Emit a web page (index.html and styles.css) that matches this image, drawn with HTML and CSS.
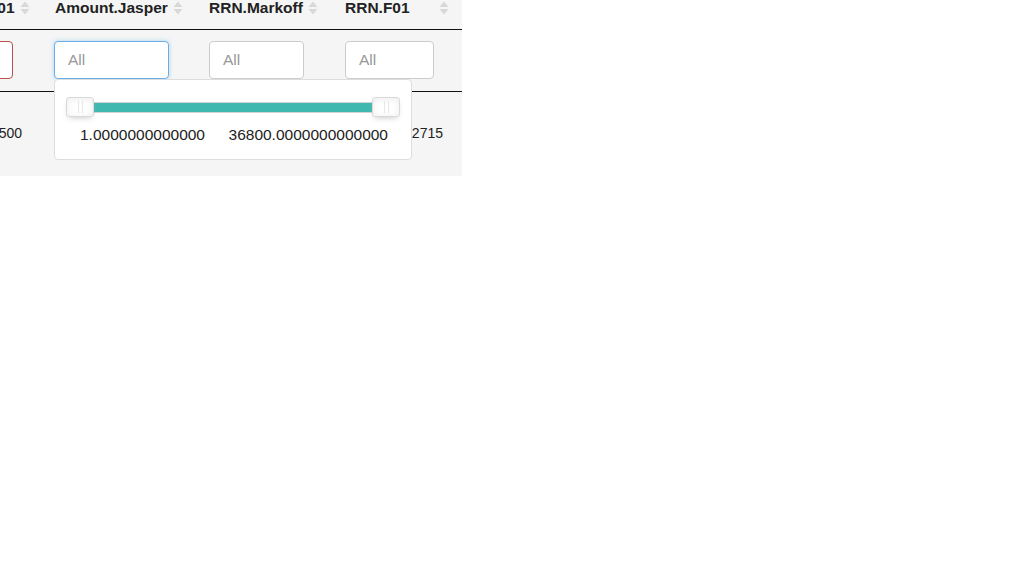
FILE: index.html
```html
<!DOCTYPE html>
<html lang="en">
<head>
    <meta charset="UTF-8">
    <meta name="viewport" content="width=device-width, initial-scale=1.0">
    <title>Transactions</title>
    <link rel="stylesheet" href="styles.css">
</head>
<body>
    <div class="table-view">
        <table class="grid">
            <colgroup>
                <col class="col-first">
                <col class="col-amount">
                <col class="col-markoff">
                <col class="col-f01">
            </colgroup>
            <thead>
                <tr class="head-row">
                    <th><div class="th-inner"><span>Amount.F01</span><svg class="sort" width="10" height="14" viewBox="0 0 10 14"><path d="M5 0.5 L9.5 6 L0.5 6 Z"/><path d="M0.5 8 L9.5 8 L5 13.5 Z"/></svg></div></th>
                    <th><div class="th-inner"><span>Amount.Jasper</span><svg class="sort" width="10" height="14" viewBox="0 0 10 14"><path d="M5 0.5 L9.5 6 L0.5 6 Z"/><path d="M0.5 8 L9.5 8 L5 13.5 Z"/></svg></div></th>
                    <th><div class="th-inner"><span>RRN.Markoff</span><svg class="sort" width="10" height="14" viewBox="0 0 10 14"><path d="M5 0.5 L9.5 6 L0.5 6 Z"/><path d="M0.5 8 L9.5 8 L5 13.5 Z"/></svg></div></th>
                    <th><div class="th-inner"><span>RRN.F01</span><svg class="sort" width="10" height="14" viewBox="0 0 10 14"><path d="M5 0.5 L9.5 6 L0.5 6 Z"/><path d="M0.5 8 L9.5 8 L5 13.5 Z"/></svg></div></th>
                </tr>
                <tr class="filter-row">
                    <td><input type="text" class="filter filter-first invalid" placeholder="All"></td>
                    <td>
                        <div class="filter-wrap">
                            <input type="text" class="filter filter-amount focused" placeholder="All">
                            <div class="range-popup">
                                <div class="slider">
                                    <div class="connect"></div>
                                    <div class="handle handle-lower"></div>
                                    <div class="handle handle-upper"></div>
                                </div>
                                <div class="range-labels">
                                    <span>1.0000000000000</span>
                                    <span>36800.0000000000000</span>
                                </div>
                            </div>
                        </div>
                    </td>
                    <td><input type="text" class="filter filter-markoff" placeholder="All"></td>
                    <td><input type="text" class="filter filter-f01" placeholder="All"></td>
                </tr>
            </thead>
            <tbody>
                <tr class="data-row">
                    <td>1500</td>
                    <td></td>
                    <td></td>
                    <td>482913372715</td>
                </tr>
            </tbody>
        </table>
    </div>
</body>
</html>
```

FILE: styles.css
```css
body {
    margin: 0;
    background-color: #fff;
    font-family: "Liberation Sans", Arial, sans-serif;
    color: #222;
}
.table-view {
    width: 462px;
    height: 176px;
    overflow: hidden;
    background-color: #f5f5f5;
}
.grid {
    table-layout: fixed;
    border-collapse: collapse;
    width: 551px;
    margin-left: -85px;
}
.col-first {
    width: 130px;
}
.col-amount {
    width: 154px;
}
.col-markoff {
    width: 136px;
}
.col-f01 {
    width: 131px;
}
.head-row th {
    padding: 0 17px 14px 10px;
    line-height: 15px;
    font-size: 15.5px;
    font-weight: bold;
    text-align: left;
    white-space: nowrap;
    border-bottom: 1px solid #111;
}
.th-inner {
    display: flex;
    justify-content: space-between;
    align-items: center;
    gap: 5px;
}
.sort {
    flex: none;
    fill: #d8d8d8;
}
.filter-row td {
    padding: 11px 0 12px 10px;
    border-bottom: 1px solid #111;
}
.filter-wrap {
    position: relative;
}
.filter {
    display: block;
    box-sizing: border-box;
    height: 38px;
    padding: 0 13px;
    border: 1px solid #ccc;
    border-radius: 4px;
    background-color: #fff;
    font-family: "Liberation Sans", Arial, sans-serif;
    font-size: 15.5px;
    color: #555;
}
.filter::placeholder {
    color: #999;
}
.filter-first {
    width: 88px;
}
.filter-amount {
    width: 115px;
    margin-left: -1px;
}
.filter-markoff {
    width: 95px;
}
.filter-f01 {
    width: 89px;
}
.invalid {
    border-color: #b9504c;
}
.focused {
    border-color: #66afe9;
    box-shadow: 0 0 4px rgba(102, 175, 233, 0.5);
}
.range-popup {
    position: absolute;
    top: 100%;
    left: -1px;
    z-index: 2;
    box-sizing: border-box;
    width: 358px;
    padding: 22px 25px 15px;
    background-color: #fff;
    border: 1px solid #ddd;
    border-radius: 4px;
}
.slider {
    position: relative;
    box-sizing: border-box;
    height: 11px;
    border: 1px solid #d3d3d3;
    border-radius: 4px;
    background-color: #fafafa;
}
.connect {
    position: absolute;
    inset: 0;
    background-color: #3fb8af;
}
.handle {
    position: absolute;
    top: -6px;
    box-sizing: border-box;
    width: 28px;
    height: 20px;
    border: 1px solid #d9d9d9;
    border-radius: 3px;
    background-color: #fff;
    box-shadow: inset 0 0 1px #fff, inset 0 1px 7px #ebebeb, 0 3px 6px -3px #bbb;
}
.handle::before,
.handle::after {
    content: "";
    position: absolute;
    top: 3px;
    width: 1px;
    height: 12px;
    background-color: #e8e7e6;
}
.handle::before {
    left: 11px;
}
.handle::after {
    left: 15px;
}
.handle-lower {
    left: -15px;
}
.handle-upper {
    right: -15px;
}
.range-labels {
    display: flex;
    justify-content: space-between;
    margin: 13px -2px 0 0;
    font-size: 15.5px;
    line-height: 18px;
    color: #222;
    white-space: nowrap;
}
.data-row td {
    height: 83px;
    box-sizing: border-box;
    padding: 0 23px 0 10px;
    font-size: 14px;
    text-align: right;
    vertical-align: middle;
    white-space: nowrap;
    overflow: hidden;
}
```
